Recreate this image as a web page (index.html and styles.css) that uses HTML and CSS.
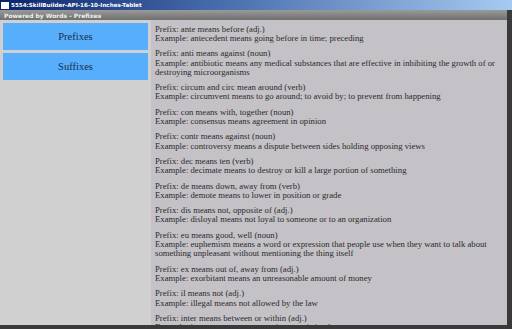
FILE: index.html
```html
<!DOCTYPE html>
<html lang="en">
<head>
  <meta charset="UTF-8" />
  <title>5554:SkillBuilder-API-16-10-Inches-Tablet</title>
  <link rel="stylesheet" href="styles.css">
</head>
<body>
  <div class="window">
    <div class="titlebar">
      <span class="title-icon"></span>
      <span class="title-text">5554:SkillBuilder-API-16-10-Inches-Tablet</span>
    </div>
    <div class="appbar">Powered by Words - Prefixes</div>
    <div class="main">
      <div class="sidebar">
        <button class="tab">Prefixes</button>
        <button class="tab">Suffixes</button>
      </div>
      <div class="list">
        <div class="entry">
          <p>Prefix: ante means before (adj.)</p>
          <p>Example: antecedent means going before in time; preceding</p>
        </div>
        <div class="entry">
          <p>Prefix: anti means against (noun)</p>
          <p>Example: antibiotic means any medical substances that are effective in inhibiting the growth of or destroying microorganisms</p>
        </div>
        <div class="entry">
          <p>Prefix: circum and circ mean around (verb)</p>
          <p>Example: circumvent means to go around; to avoid by; to prevent from happening</p>
        </div>
        <div class="entry">
          <p>Prefix: con means with, together (noun)</p>
          <p>Example: consensus means agreement in opinion</p>
        </div>
        <div class="entry">
          <p>Prefix: contr means against (noun)</p>
          <p>Example: controversy means a dispute between sides holding opposing views</p>
        </div>
        <div class="entry">
          <p>Prefix: dec means ten (verb)</p>
          <p>Example: decimate means to destroy or kill a large portion of something</p>
        </div>
        <div class="entry">
          <p>Prefix: de means down, away from (verb)</p>
          <p>Example: demote means to lower in position or grade</p>
        </div>
        <div class="entry">
          <p>Prefix: dis means not, opposite of (adj.)</p>
          <p>Example: disloyal means not loyal to someone or to an organization</p>
        </div>
        <div class="entry">
          <p>Prefix: eu means good, well (noun)</p>
          <p>Example: euphemism means a word or expression that people use when they want to talk about something unpleasant without mentioning the thing itself</p>
        </div>
        <div class="entry">
          <p>Prefix: ex means out of, away from (adj.)</p>
          <p>Example: exorbitant means an unreasonable amount of money</p>
        </div>
        <div class="entry">
          <p>Prefix: il means not (adj.)</p>
          <p>Example: illegal means not allowed by the law</p>
        </div>
        <div class="entry">
          <p>Prefix: inter means between or within (adj.)</p>
          <p>Example: interstate means connecting or existing between states</p>
        </div>
      </div>
    </div>
  </div>
</body>
</html>
```

FILE: styles.css
```css
:root {
  --title-dark: #0a246a;
  --title-light: #a6caf0;
  --panel: #d0d0d0;
  --list-bg: #c4c2c6;
  --tab-blue: #56aefc;
  --frame: #3a3a3a;
}

body {
  margin: 0;
  width: 512px;
  height: 329px;
  overflow: hidden;
  background: var(--frame);
  font-family: "Liberation Serif", serif;
}

.window {
  display: flex;
  flex-direction: column;
  height: 325px;
}

.titlebar {
  height: 10px;
  display: flex;
  align-items: center;
  gap: 2px;
  padding-left: 1px;
  background: linear-gradient(90deg, var(--title-dark), #4468a8 40%, var(--title-light));
  font-family: "DejaVu Sans", sans-serif;
  font-size: 5.6px;
  font-weight: bold;
  color: #fff;
  white-space: nowrap;
}

.title-icon {
  width: 8px;
  height: 7px;
  background: #fff;
}

.appbar {
  height: 10px;
  display: flex;
  align-items: center;
  padding-left: 4px;
  margin-right: 5px;
  background: linear-gradient(#9a9a9a, #6f6f6f);
  font-family: "DejaVu Sans", sans-serif;
  font-size: 6px;
  font-weight: bold;
  color: #eee;
}

.main {
  flex: 1;
  display: flex;
  margin-right: 5px;
  min-height: 0;
}

.sidebar {
  width: 145px;
  padding: 3px;
  display: flex;
  flex-direction: column;
  gap: 3px;
  background: var(--panel);
}

.tab {
  height: 27px;
  border: none;
  padding: 0;
  background: var(--tab-blue);
  font-family: "Liberation Serif", serif;
  font-size: 10.5px;
  color: #1c2c48;
}

.list {
  flex: 1;
  overflow: hidden;
  padding: 4.7px 3px 0 4px;
  background: var(--list-bg);
  color: #2b2b2b;
  font-size: 8.7px;
  line-height: 9.3px;
}

.entry {
  margin-bottom: 6px;
}

.entry p {
  margin: 0;
}
```
